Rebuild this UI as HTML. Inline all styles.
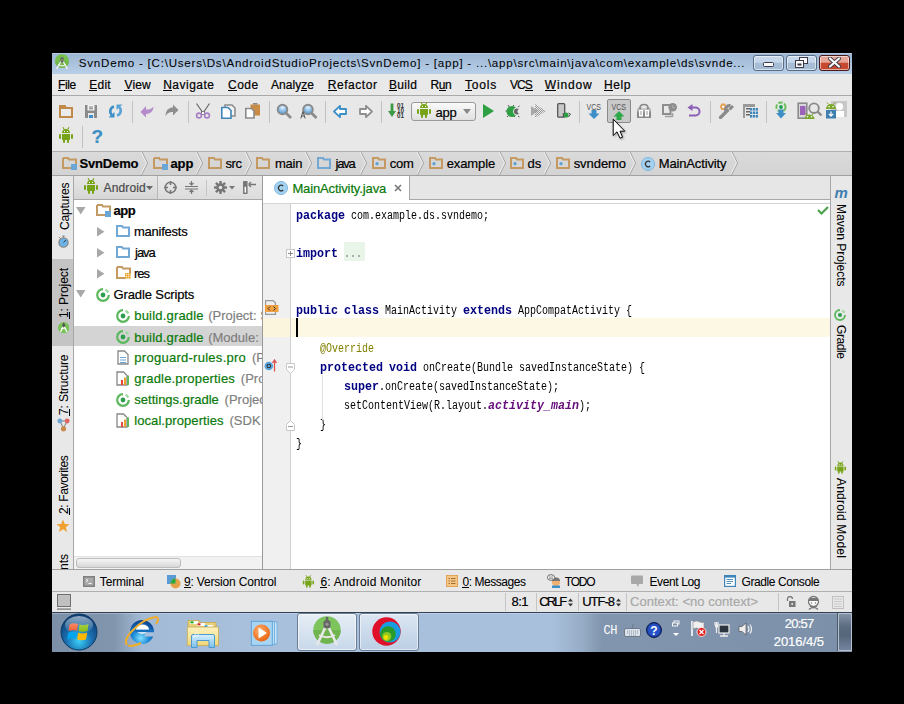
<!DOCTYPE html>
<html><head><meta charset="utf-8">
<style>
*{margin:0;padding:0;box-sizing:border-box}
html,body{width:904px;height:704px;background:#000;overflow:hidden;font-family:"Liberation Sans",sans-serif;font-size:13px;color:#000;position:relative}
.a{position:absolute;display:block}
.t{position:absolute;white-space:pre;-webkit-text-stroke:0.2px currentColor}
</style></head><body>
<div class="a" style="left:52px;top:53px;width:800px;height:599px;background:#e8e8e8;"></div>
<div class="a" style="left:52px;top:53px;width:800px;height:21px;background:linear-gradient(#9cb5d2,#b8cfe8);"></div>
<div class="a" style="left:52px;top:53px;width:800px;height:1px;background:#b4cbe6;"></div>
<div class="a" style="left:52px;top:74px;width:800px;height:21px;background:#e9e9e9;"></div>
<div class="a" style="left:52px;top:95px;width:800px;height:1px;background:#a9a9a9;"></div>
<div class="a" style="left:52px;top:96px;width:800px;height:55px;background:#e8e8e8;"></div>
<div class="a" style="left:52px;top:151px;width:800px;height:1px;background:#b0b0b0;"></div>
<div class="a" style="left:52px;top:152px;width:800px;height:23px;background:linear-gradient(#dadada,#d3d3d3);"></div>
<div class="a" style="left:52px;top:175px;width:800px;height:1px;background:#a0a0a0;"></div>
<div class="a" style="left:52px;top:176px;width:21px;height:393px;background:#e8e8e8;"></div>
<div class="a" style="left:52px;top:259px;width:21px;height:87px;background:#c4c4c4;"></div>
<div class="a" style="left:73px;top:176px;width:1px;height:393px;background:#a8a8a8;"></div>
<div class="a" style="left:74px;top:176px;width:188px;height:23px;background:linear-gradient(#e9e9e9,#dcdcdc);"></div>
<div class="a" style="left:74px;top:199px;width:188px;height:1px;background:#a8a8a8;"></div>
<div class="a" style="left:74px;top:200px;width:188px;height:369px;background:#fff;"></div>
<div class="a" style="left:262px;top:176px;width:1px;height:393px;background:#9a9a9a;"></div>
<div class="a" style="left:263px;top:176px;width:567px;height:27px;background:#fff;"></div>
<div class="a" style="left:410px;top:176px;width:420px;height:23px;background:#e6e6e6;"></div>
<div class="a" style="left:409px;top:176px;width:1px;height:24px;background:#a8a8a8;"></div>
<div class="a" style="left:410px;top:199px;width:420px;height:1px;background:#a8a8a8;"></div>
<div class="a" style="left:263px;top:203px;width:567px;height:1px;background:#d4d4d4;"></div>
<div class="a" style="left:263px;top:204px;width:27px;height:365px;background:#f0f0f0;"></div>
<div class="a" style="left:290px;top:204px;width:1px;height:365px;background:#d0d0d0;"></div>
<div class="a" style="left:291px;top:204px;width:539px;height:365px;background:#fff;"></div>
<div class="a" style="left:830px;top:176px;width:1px;height:393px;background:#a8a8a8;"></div>
<div class="a" style="left:831px;top:176px;width:21px;height:393px;background:#e8e8e8;"></div>
<div class="a" style="left:52px;top:569px;width:800px;height:1px;background:#a0a0a0;"></div>
<div class="a" style="left:52px;top:570px;width:800px;height:21px;background:#e8e8e8;"></div>
<div class="a" style="left:52px;top:591px;width:800px;height:1px;background:#b0b0b0;"></div>
<div class="a" style="left:52px;top:592px;width:800px;height:20px;background:#e8e8e8;"></div>
<div class="a" style="left:52px;top:612px;width:800px;height:40px;background:linear-gradient(90deg,#7d90a9 0px,#8195ad 62px,#a3bad6 90px,#a8c0dc 200px,#a8c0dc 500px,#97acc6 530px,#8195ae 550px,#7c90a9 800px);"></div>
<div class="a" style="left:52px;top:612px;width:800px;height:1px;background:#334155;"></div>
<div class="a" style="left:52px;top:613px;width:800px;height:1px;background:rgba(255,255,255,0.25);"></div>
<div class="a" style="left:74px;top:176px;width:84px;height:23px;background:linear-gradient(#e6e6e6,#d6d6d6);border-right:1px solid #b8b8b8;"></div>
<div class="a" style="left:74px;top:326px;width:188px;height:20px;background:#d4d4d4;"></div>
<div class="a" style="left:291px;top:318px;width:539px;height:19px;background:#fdf8e3;"></div>
<div class="a" style="left:263px;top:318px;width:27px;height:19px;background:#fbf5dd;"></div>
<div class="a" style="left:344px;top:242px;width:21px;height:19px;background:#eaf5ea;"></div>
<div class="t" style="left:78.80px;top:57.38px;font-size:11.6px;line-height:11.6px;color:#000;letter-spacing:0.759px;-webkit-text-stroke:0.05px;">SvnDemo - [C:\Users\Ds\AndroidStudioProjects\SvnDemo] - [app] - ...\app\src\main\java\com\example\ds\svnde...</div>
<div class="t" style="left:58.00px;top:79.04px;font-size:12px;line-height:12.0px;color:#000;letter-spacing:-0.367px;">File</div>
<div class="a" style="left:58px;top:90px;width:7px;height:1px;background:#000;"></div>
<div class="t" style="left:89.20px;top:79.04px;font-size:12px;line-height:12.0px;color:#000;letter-spacing:0.267px;">Edit</div>
<div class="a" style="left:89px;top:90px;width:8px;height:1px;background:#000;"></div>
<div class="t" style="left:124.40px;top:79.04px;font-size:12px;line-height:12.0px;color:#000;letter-spacing:0.200px;">View</div>
<div class="a" style="left:124px;top:90px;width:8px;height:1px;background:#000;"></div>
<div class="t" style="left:163.20px;top:79.04px;font-size:12px;line-height:12.0px;color:#000;letter-spacing:0.486px;">Navigate</div>
<div class="a" style="left:163px;top:90px;width:9px;height:1px;background:#000;"></div>
<div class="t" style="left:228.00px;top:79.04px;font-size:12px;line-height:12.0px;color:#000;letter-spacing:0.467px;">Code</div>
<div class="a" style="left:228px;top:90px;width:9px;height:1px;background:#000;"></div>
<div class="t" style="left:271.00px;top:79.04px;font-size:12px;line-height:12.0px;color:#000;letter-spacing:0.033px;">Analyze</div>
<div class="a" style="left:301px;top:90px;width:6px;height:1px;background:#000;"></div>
<div class="t" style="left:327.80px;top:79.04px;font-size:12px;line-height:12.0px;color:#000;letter-spacing:0.543px;">Refactor</div>
<div class="a" style="left:328px;top:90px;width:9px;height:1px;background:#000;"></div>
<div class="t" style="left:389.00px;top:79.04px;font-size:12px;line-height:12.0px;color:#000;letter-spacing:0.325px;">Build</div>
<div class="a" style="left:389px;top:90px;width:8px;height:1px;background:#000;"></div>
<div class="t" style="left:430.40px;top:79.04px;font-size:12px;line-height:12.0px;color:#000;letter-spacing:-0.350px;">Run</div>
<div class="a" style="left:439px;top:90px;width:7px;height:1px;background:#000;"></div>
<div class="t" style="left:465.00px;top:79.04px;font-size:12px;line-height:12.0px;color:#000;letter-spacing:0.825px;">Tools</div>
<div class="a" style="left:465px;top:90px;width:7px;height:1px;background:#000;"></div>
<div class="t" style="left:510.00px;top:79.04px;font-size:12px;line-height:12.0px;color:#000;letter-spacing:-1.000px;">VCS</div>
<div class="a" style="left:525px;top:90px;width:8px;height:1px;background:#000;"></div>
<div class="t" style="left:544.80px;top:79.04px;font-size:12px;line-height:12.0px;color:#000;letter-spacing:0.820px;">Window</div>
<div class="a" style="left:545px;top:90px;width:11px;height:1px;background:#000;"></div>
<div class="t" style="left:603.90px;top:79.04px;font-size:12px;line-height:12.0px;color:#000;letter-spacing:0.633px;">Help</div>
<div class="a" style="left:604px;top:90px;width:9px;height:1px;background:#000;"></div>
<div class="t" style="left:79.50px;top:157.30px;font-size:13px;line-height:13.0px;color:#000;letter-spacing:-0.167px;font-weight:bold;">SvnDemo</div>
<div class="t" style="left:170.40px;top:157.30px;font-size:13px;line-height:13.0px;color:#000;letter-spacing:-0.050px;font-weight:bold;">app</div>
<div class="t" style="left:225.50px;top:157.30px;font-size:13px;line-height:13.0px;color:#000;letter-spacing:-0.450px;">src</div>
<div class="t" style="left:274.90px;top:157.30px;font-size:13px;line-height:13.0px;color:#000;letter-spacing:-0.167px;">main</div>
<div class="t" style="left:335.50px;top:157.30px;font-size:13px;line-height:13.0px;color:#000;letter-spacing:-1.167px;">java</div>
<div class="t" style="left:389.70px;top:157.30px;font-size:13px;line-height:13.0px;color:#000;letter-spacing:-0.150px;">com</div>
<div class="t" style="left:446.70px;top:157.30px;font-size:13px;line-height:13.0px;color:#000;letter-spacing:-0.100px;">example</div>
<div class="t" style="left:527.50px;top:157.30px;font-size:13px;line-height:13.0px;color:#000;letter-spacing:-0.100px;">ds</div>
<div class="t" style="left:573.70px;top:157.30px;font-size:13px;line-height:13.0px;color:#000;letter-spacing:-0.067px;">svndemo</div>
<div class="t" style="left:658.70px;top:157.30px;font-size:13px;line-height:13.0px;color:#000;letter-spacing:-0.136px;">MainActivity</div>
<div class="t" style="left:103.50px;top:181.74px;font-size:12px;line-height:12.0px;color:#4a4a4a;letter-spacing:0.133px;">Android</div>
<div class="a" style="left:74px;top:200px;width:188px;height:369px;overflow:hidden">
<div class="t" style="left:39.50px;top:3.80px;font-size:13px;line-height:13.0px;color:#000;letter-spacing:-0.500px;font-weight:bold;">app</div>
<div class="t" style="left:60.00px;top:25.00px;font-size:13px;line-height:13.0px;color:#000;letter-spacing:-0.250px;">manifests</div>
<div class="t" style="left:61.00px;top:46.00px;font-size:13px;line-height:13.0px;color:#000;letter-spacing:-1.000px;">java</div>
<div class="t" style="left:60.00px;top:67.00px;font-size:13px;line-height:13.0px;color:#000;letter-spacing:-1.000px;">res</div>
<div class="t" style="left:39.50px;top:88.20px;font-size:13px;line-height:13.0px;color:#000;letter-spacing:-0.115px;">Gradle Scripts</div>
<div class="t" style="left:60.30px;top:109.00px;font-size:13px;line-height:13.0px;color:#0a7a0a;letter-spacing:0.182px;">build.gradle</div>
<div class="t" style="left:134.20px;top:109.00px;font-size:13px;line-height:13.0px;color:#7f7f7f;">(Project: SvnDemo)</div>
<div class="t" style="left:60.30px;top:130.70px;font-size:13px;line-height:13.0px;color:#0a7a0a;letter-spacing:0.182px;">build.gradle</div>
<div class="t" style="left:134.20px;top:130.70px;font-size:13px;line-height:13.0px;color:#7f7f7f;">(Module: app)</div>
<div class="t" style="left:60.30px;top:151.00px;font-size:13px;line-height:13.0px;color:#0a7a0a;letter-spacing:0.271px;">proguard-rules.pro</div>
<div class="t" style="left:177.90px;top:151.00px;font-size:13px;line-height:13.0px;color:#7f7f7f;">(ProGuard Rules for app)</div>
<div class="t" style="left:60.30px;top:172.00px;font-size:13px;line-height:13.0px;color:#0a7a0a;letter-spacing:0.188px;">gradle.properties</div>
<div class="t" style="left:166.80px;top:172.00px;font-size:13px;line-height:13.0px;color:#7f7f7f;">(Project Properties)</div>
<div class="t" style="left:60.30px;top:193.00px;font-size:13px;line-height:13.0px;color:#0a7a0a;">settings.gradle</div>
<div class="t" style="left:150.60px;top:193.00px;font-size:13px;line-height:13.0px;color:#7f7f7f;">(Project Settings)</div>
<div class="t" style="left:60.30px;top:214.00px;font-size:13px;line-height:13.0px;color:#0a7a0a;letter-spacing:0.067px;">local.properties</div>
<div class="t" style="left:155.50px;top:214.00px;font-size:13px;line-height:13.0px;color:#7f7f7f;">(SDK Location)</div>
</div>
<div class="t" style="left:292.40px;top:182.00px;font-size:13px;line-height:13.0px;color:#0a7a0a;letter-spacing:-0.125px;">MainActivity.java</div>
<div class="t" style="left:99.80px;top:575.84px;font-size:12px;line-height:12.0px;color:#000;letter-spacing:-0.171px;-webkit-text-stroke:0.05px;">Terminal</div>
<div class="t" style="left:184.00px;top:575.84px;font-size:12px;line-height:12.0px;color:#000;letter-spacing:-0.176px;-webkit-text-stroke:0.05px;">9: Version Control</div>
<div class="a" style="left:184px;top:587px;width:7px;height:1px;background:#000;"></div>
<div class="t" style="left:320.50px;top:575.84px;font-size:12px;line-height:12.0px;color:#000;letter-spacing:0.200px;-webkit-text-stroke:0.05px;">6: Android Monitor</div>
<div class="a" style="left:320px;top:587px;width:7px;height:1px;background:#000;"></div>
<div class="t" style="left:462.50px;top:575.84px;font-size:12px;line-height:12.0px;color:#000;letter-spacing:-0.450px;-webkit-text-stroke:0.05px;">0: Messages</div>
<div class="a" style="left:462px;top:587px;width:7px;height:1px;background:#000;"></div>
<div class="t" style="left:564.70px;top:575.84px;font-size:12px;line-height:12.0px;color:#000;letter-spacing:-1.167px;-webkit-text-stroke:0.05px;">TODO</div>
<div class="t" style="left:649.40px;top:575.84px;font-size:12px;line-height:12.0px;color:#000;letter-spacing:-0.362px;-webkit-text-stroke:0.05px;">Event Log</div>
<div class="t" style="left:741.50px;top:575.84px;font-size:12px;line-height:12.0px;color:#000;letter-spacing:-0.400px;-webkit-text-stroke:0.05px;">Gradle Console</div>
<div class="t" style="left:511.50px;top:595.20px;font-size:13px;line-height:13.0px;color:#000;letter-spacing:-0.500px;">8:1</div>
<div class="t" style="left:539.30px;top:595.20px;font-size:13px;line-height:13.0px;color:#000;letter-spacing:-2.000px;">CRLF</div>
<div class="t" style="left:582.20px;top:595.20px;font-size:13px;line-height:13.0px;color:#000;letter-spacing:-1.000px;">UTF-8</div>
<div class="t" style="left:630.00px;top:595.20px;font-size:13px;line-height:13.0px;color:#a8a8a8;letter-spacing:0.040px;">Context: &lt;no context&gt;</div>
<div class="t" style="left:603.40px;top:625.10px;font-size:12px;line-height:12.0px;color:#fff;letter-spacing:-0.400px;font-family:'Liberation Mono',monospace;-webkit-text-stroke:0;">CH</div>
<div class="t" style="left:784.70px;top:617.30px;font-size:13px;line-height:13.0px;color:#fff;letter-spacing:-0.750px;">20:57</div>
<div class="t" style="left:773.70px;top:635.20px;font-size:13px;line-height:13.0px;color:#fff;letter-spacing:-0.029px;">2016/4/5</div>
<div class="t" style="left:295.50px;top:210.40px;font-size:12px;line-height:12px;color:#000080;font-family:'Liberation Mono',monospace;transform-origin:0 0;transform:scaleX(0.9722);-webkit-text-stroke:0;font-weight:bold;">package</div>
<div class="t" style="left:344.50px;top:210.40px;font-size:12px;line-height:12px;color:#000;font-family:'Liberation Mono',monospace;transform-origin:0 0;transform:scaleX(0.8333);-webkit-text-stroke:0;"> com.example.ds.svndemo;</div>
<div class="t" style="left:295.50px;top:248.40px;font-size:12px;line-height:12px;color:#000080;font-family:'Liberation Mono',monospace;transform-origin:0 0;transform:scaleX(0.9722);-webkit-text-stroke:0;font-weight:bold;">import</div>
<div class="t" style="left:343.50px;top:248.40px;font-size:12px;line-height:12px;color:#808080;font-family:'Liberation Mono',monospace;transform-origin:0 0;transform:scaleX(0.8333);-webkit-text-stroke:0;">...</div>
<div class="t" style="left:295.50px;top:305.40px;font-size:12px;line-height:12px;color:#000080;font-family:'Liberation Mono',monospace;transform-origin:0 0;transform:scaleX(0.9722);-webkit-text-stroke:0;font-weight:bold;">public</div>
<div class="t" style="left:343.50px;top:305.40px;font-size:12px;line-height:12px;color:#000080;font-family:'Liberation Mono',monospace;transform-origin:0 0;transform:scaleX(0.9722);-webkit-text-stroke:0;font-weight:bold;">class</div>
<div class="t" style="left:378.50px;top:305.40px;font-size:12px;line-height:12px;color:#000;font-family:'Liberation Mono',monospace;transform-origin:0 0;transform:scaleX(0.8333);-webkit-text-stroke:0;"> MainActivity </div>
<div class="t" style="left:462.50px;top:305.40px;font-size:12px;line-height:12px;color:#000080;font-family:'Liberation Mono',monospace;transform-origin:0 0;transform:scaleX(0.9722);-webkit-text-stroke:0;font-weight:bold;">extends</div>
<div class="t" style="left:511.50px;top:305.40px;font-size:12px;line-height:12px;color:#000;font-family:'Liberation Mono',monospace;transform-origin:0 0;transform:scaleX(0.8333);-webkit-text-stroke:0;"> AppCompatActivity {</div>
<div class="t" style="left:319.50px;top:343.40px;font-size:12px;line-height:12px;color:#808000;font-family:'Liberation Mono',monospace;transform-origin:0 0;transform:scaleX(0.8333);-webkit-text-stroke:0;">@Override</div>
<div class="t" style="left:319.50px;top:362.40px;font-size:12px;line-height:12px;color:#000080;font-family:'Liberation Mono',monospace;transform-origin:0 0;transform:scaleX(0.9722);-webkit-text-stroke:0;font-weight:bold;">protected</div>
<div class="t" style="left:388.50px;top:362.40px;font-size:12px;line-height:12px;color:#000080;font-family:'Liberation Mono',monospace;transform-origin:0 0;transform:scaleX(0.9722);-webkit-text-stroke:0;font-weight:bold;">void</div>
<div class="t" style="left:416.50px;top:362.40px;font-size:12px;line-height:12px;color:#000;font-family:'Liberation Mono',monospace;transform-origin:0 0;transform:scaleX(0.8333);-webkit-text-stroke:0;"> onCreate(Bundle savedInstanceState) {</div>
<div class="t" style="left:343.50px;top:381.40px;font-size:12px;line-height:12px;color:#000080;font-family:'Liberation Mono',monospace;transform-origin:0 0;transform:scaleX(0.9722);-webkit-text-stroke:0;font-weight:bold;">super</div>
<div class="t" style="left:378.50px;top:381.40px;font-size:12px;line-height:12px;color:#000;font-family:'Liberation Mono',monospace;transform-origin:0 0;transform:scaleX(0.8333);-webkit-text-stroke:0;">.onCreate(savedInstanceState);</div>
<div class="t" style="left:295.50px;top:400.40px;font-size:12px;line-height:12px;color:#000;font-family:'Liberation Mono',monospace;transform-origin:0 0;transform:scaleX(0.8333);-webkit-text-stroke:0;">        setContentView(R.layout.</div>
<div class="t" style="left:487.50px;top:400.40px;font-size:12px;line-height:12px;color:#660e7a;font-family:'Liberation Mono',monospace;transform-origin:0 0;transform:scaleX(0.9722);-webkit-text-stroke:0;font-weight:bold;font-style:italic;">activity_main</div>
<div class="t" style="left:578.50px;top:400.40px;font-size:12px;line-height:12px;color:#000;font-family:'Liberation Mono',monospace;transform-origin:0 0;transform:scaleX(0.8333);-webkit-text-stroke:0;">);</div>
<div class="t" style="left:295.50px;top:419.40px;font-size:12px;line-height:12px;color:#000;font-family:'Liberation Mono',monospace;transform-origin:0 0;transform:scaleX(0.8333);-webkit-text-stroke:0;">    }</div>
<div class="t" style="left:295.50px;top:438.40px;font-size:12px;line-height:12px;color:#000;font-family:'Liberation Mono',monospace;transform-origin:0 0;transform:scaleX(0.8333);-webkit-text-stroke:0;">}</div>
<div class="a" style="left:296px;top:318px;width:2px;height:19px;background:#000;"></div>
<svg class="a" style="left:59px;top:105px;" width="14" height="13" viewBox="0 0 14 13"><path d="M0 0 H6.5 L7.5 2 H14 V13 H0 Z" fill="#c28a48"/><rect x="2" y="4" width="10" height="7" fill="#ececec"/></svg>
<svg class="a" style="left:85px;top:105px;" width="12" height="13" viewBox="0 0 12 13"><path d="M0 0 H12 V13 H0 Z" fill="#8a8a8a"/><rect x="2.5" y="0" width="7" height="5.5" fill="#f4f4f4"/><rect x="4" y="1.5" width="4" height="1" fill="#777"/><rect x="4" y="3.3" width="4" height="1" fill="#777"/><rect x="3" y="8" width="6" height="5" fill="#e8e8e8"/><rect x="4" y="10" width="4" height="3" fill="#3d8fc6"/></svg>
<svg class="a" style="left:108px;top:104px;" width="15" height="14" viewBox="0 0 15 14"><path d="M6 2.5 A5 5 0 0 0 4.5 11.5" fill="none" stroke="#3d8fc6" stroke-width="2.6"/><path d="M9 11.5 A5 5 0 0 0 10.5 2.5" fill="none" stroke="#5aa3d4" stroke-width="2.6"/><path d="M0.5 13.5 L6.5 13.5 L6.5 8 Z" fill="#3d8fc6"/><path d="M14.5 0.5 L8.5 0.5 L8.5 6 Z" fill="#5aa3d4"/></svg>
<div class="a" style="left:132px;top:101px;width:1px;height:22px;background:#c2c2c2;"></div>
<svg class="a" style="left:140px;top:105px;" width="14" height="13" viewBox="0 0 14 13"><path d="M0.5 7 L6 1 L6 4.5 C9 4.5 12 4 13.5 1.5 C13.5 6 10.5 9 6 9 L6 12.5 Z" fill="#b48bcb"/></svg>
<svg class="a" style="left:165px;top:104px;" width="14" height="13" viewBox="0 0 14 13"><path d="M13.5 6 L8 0.5 L8 3.5 C4 3.5 0.5 6 0.5 12.5 C2 9 4.5 8 8 8 L8 11.5 Z" fill="#8e8e8e"/></svg>
<div class="a" style="left:188px;top:101px;width:1px;height:22px;background:#c2c2c2;"></div>
<svg class="a" style="left:195px;top:103px;" width="16" height="16" viewBox="0 0 16 16"><path d="M1.5 0.5 L8 10 M14.5 0.5 L8 10" stroke="#666" stroke-width="1.2" fill="none"/><rect x="6.5" y="8.5" width="3" height="3" fill="#fff" stroke="#666" stroke-width="0.8"/><circle cx="4" cy="12.5" r="2.4" fill="none" stroke="#a77fc4" stroke-width="1.6"/><circle cx="12" cy="12.5" r="2.4" fill="none" stroke="#a77fc4" stroke-width="1.6"/></svg>
<svg class="a" style="left:221px;top:104px;" width="15" height="15" viewBox="0 0 15 15"><path d="M4 1 H11 L14 4 V12 H4 Z" fill="#f2f2f2" stroke="#8a8a8a" stroke-width="1.5"/><path d="M0.8 3.5 H7 L10 6.5 V14.2 H0.8 Z" fill="#fff" stroke="#3e86b8" stroke-width="1.6"/></svg>
<svg class="a" style="left:245px;top:103px;" width="16" height="16" viewBox="0 0 16 16"><rect x="5.5" y="1.5" width="9.5" height="11" fill="#c98b45"/><rect x="8" y="0" width="4.5" height="1.6" fill="#888"/><path d="M0.8 5.5 H6.5 L9 8 V15 H0.8 Z" fill="#fff" stroke="#8a8a8a" stroke-width="1.6"/></svg>
<div class="a" style="left:269px;top:101px;width:1px;height:22px;background:#c2c2c2;"></div>
<svg class="a" style="left:276px;top:103px;" width="17" height="16" viewBox="0 0 17 16"><defs><radialGradient id="lg1" cx="0.5" cy="0.3" r="0.6"><stop offset="0" stop-color="#e4f2ff"/><stop offset="1" stop-color="#5aa0d8"/></radialGradient></defs><circle cx="6.5" cy="6.5" r="4.8" fill="url(#lg1)" stroke="#8a8a8a" stroke-width="1.9"/><path d="M10 10 L15 15" stroke="#8a8a8a" stroke-width="2.6"/></svg>
<svg class="a" style="left:300px;top:103px;" width="18" height="16" viewBox="0 0 18 16"><circle cx="8" cy="6.5" r="4.8" fill="url(#lg1)" stroke="#8a8a8a" stroke-width="1.9"/><path d="M11.5 10 L16.5 15" stroke="#8a8a8a" stroke-width="2.6"/><path d="M0.8 15.5 L3 8.5 L5.2 15.5 M1.6 13 H4.4" stroke="#555" stroke-width="1" fill="none"/></svg>
<div class="a" style="left:325px;top:101px;width:1px;height:22px;background:#c2c2c2;"></div>
<svg class="a" style="left:333px;top:105px;" width="14" height="13" viewBox="0 0 14 13"><path d="M1 6.5 L7 0.8 V4 H13 V9 H7 V12.2 Z" fill="#fff" stroke="#3d8fc6" stroke-width="1.8" stroke-linejoin="round"/></svg>
<svg class="a" style="left:359px;top:105px;" width="14" height="13" viewBox="0 0 14 13"><path d="M13 6.5 L7 0.8 V4 H1 V9 H7 V12.2 Z" fill="#fff" stroke="#8e8e8e" stroke-width="1.8" stroke-linejoin="round"/></svg>
<div class="a" style="left:381px;top:101px;width:1px;height:22px;background:#c2c2c2;"></div>
<svg class="a" style="left:388px;top:103px;" width="17" height="16" viewBox="0 0 17 16"><path d="M4 0.5 V10" stroke="#3a9a45" stroke-width="2.8"/><path d="M0 8 L4 14 L8 8 Z" fill="#3a9a45"/><text x="9" y="5.3" font-family="Liberation Sans" font-size="6.3" font-weight="bold" fill="#333">01</text><text x="9" y="10.3" font-family="Liberation Sans" font-size="6.3" font-weight="bold" fill="#333">10</text><text x="9" y="15.3" font-family="Liberation Sans" font-size="6.3" font-weight="bold" fill="#333">01</text></svg>
<div class="a" style="left:411px;top:102px;width:65px;height:19px;background:linear-gradient(#fafafa,#e0e0e0);border:1px solid #9a9a9a;border-radius:3px;"></div>
<svg class="a" style="left:416px;top:102px;" width="16" height="16" viewBox="0 0 16 16"><g transform="scale(1.0)" fill="#77a318">
<path d="M4 6 C4 3.6 5.8 2 8 2 C10.2 2 12 3.6 12 6 Z"/>
<path d="M5 0.3 L6.3 2.6 M11 0.3 L9.7 2.6" stroke="#77a318" stroke-width="1.1" fill="none"/>
<path d="M4 7 H12 V12.2 Q12 13 11.2 13 H4.8 Q4 13 4 12.2 Z"/>
<rect x="1" y="7" width="2" height="5" rx="1"/>
<rect x="13" y="7" width="2" height="5" rx="1"/>
<rect x="5" y="12" width="2" height="4" rx="1"/>
<rect x="9" y="12" width="2" height="4" rx="1"/>
<rect x="6" y="4" width="1" height="1" fill="#fff"/><rect x="9" y="4" width="1" height="1" fill="#fff"/>
</g></svg>
<div class="t" style="left:435.50px;top:105.50px;font-size:13px;line-height:13.0px;color:#000;letter-spacing:-0.250px;">app</div>
<svg class="a" style="left:463px;top:109px;" width="8" height="5" viewBox="0 0 8 5"><path d="M0 0 H8 L4 5 Z" fill="#888"/></svg>
<svg class="a" style="left:483px;top:104px;" width="11" height="14" viewBox="0 0 11 14"><path d="M0 0 L11 7 L0 14 Z" fill="#2ea043"/></svg>
<svg class="a" style="left:505px;top:103px;" width="16" height="16" viewBox="0 0 16 16"><path d="M3 2 L4.5 4 M9 2 L7.5 4 M0.5 8 H2 M2 14 L3.5 12.5 M10 14 L8.5 12.5" stroke="#555" stroke-width="1"/><circle cx="7" cy="8.5" r="5.5" fill="#2ea043"/><circle cx="12.3" cy="8.5" r="4.2" fill="#e8e8e8"/><circle cx="12" cy="8.5" r="3" fill="#666"/><circle cx="14.8" cy="8.5" r="2.4" fill="#e8e8e8"/><path d="M13 4 L14.5 3 M13 13 L14.5 14" stroke="#555" stroke-width="1"/></svg>
<svg class="a" style="left:531px;top:104px;" width="15" height="14" viewBox="0 0 15 14"><defs><pattern id="dp" width="2" height="2" patternUnits="userSpaceOnUse"><rect width="1" height="1" fill="#999"/><rect x="1" y="1" width="1" height="1" fill="#999"/></pattern></defs><path d="M0 2 L7 7 L0 12 Z" fill="#a8a8a8"/><path d="M4 0 L15 7 L4 14 Z" fill="url(#dp)"/></svg>
<svg class="a" style="left:557px;top:103px;" width="14" height="16" viewBox="0 0 14 16"><rect x="0.7" y="0.7" width="7" height="13.5" rx="1" fill="#c8c8c8" stroke="#555" stroke-width="1.3"/><circle cx="9" cy="12" r="2.6" fill="#2ea043"/><path d="M11.5 10 L13.5 11 L11.5 14 M6 10 L6.5 12 L6 14" stroke="#333" stroke-width="0.8" fill="none"/></svg>
<div class="a" style="left:579px;top:101px;width:1px;height:22px;background:#c2c2c2;"></div>
<svg class="a" style="left:586px;top:103px;" width="16" height="8" viewBox="0 0 16 8"><text x="0.5" y="7.2" font-family="Liberation Sans" font-size="8.6" fill="#505050" textLength="14.5" lengthAdjust="spacingAndGlyphs">VCS</text></svg>
<svg class="a" style="left:588px;top:110px;" width="12" height="9" viewBox="0 0 12 9"><path d="M3.5 0 H8.5 V3.5 H11.5 L6 9 L0.5 3.5 H3.5 Z" fill="#3d8fc6"/></svg>
<div class="a" style="left:607px;top:99px;width:24px;height:24px;background:#c9c9c9;border:1px solid #8a8a8a;border-radius:2px;"></div>
<svg class="a" style="left:611px;top:103px;" width="16" height="8" viewBox="0 0 16 8"><text x="0.5" y="7.2" font-family="Liberation Sans" font-size="8.6" fill="#505050" textLength="14.5" lengthAdjust="spacingAndGlyphs">VCS</text></svg>
<svg class="a" style="left:613px;top:111px;" width="12" height="9" viewBox="0 0 12 9"><path d="M3.5 9 H8.5 V5.5 H11.5 L6 0 L0.5 5.5 H3.5 Z" fill="#2fa84a"/></svg>
<svg class="a" style="left:637px;top:103px;" width="14" height="15" viewBox="0 0 14 15"><defs><linearGradient id="cg" x1="0" y1="0" x2="0" y2="1"><stop offset="0" stop-color="#8a8a8a" stop-opacity="0.2"/><stop offset="0.5" stop-color="#8a8a8a"/></linearGradient></defs><rect x="0" y="5" width="14" height="10" fill="url(#cg)"/><rect x="2" y="7" width="4" height="6.5" fill="#fff"/><rect x="8" y="7" width="4" height="6.5" fill="#fff"/><path d="M3 9 H5 M3 11 H5 M9 9 H11 M9 11 H11" stroke="#888" stroke-width="0.9"/><path d="M3 5 Q3 1.5 7 1.5 Q11 1.5 11 5" stroke="#888" stroke-width="1.4" fill="none"/><path d="M1.2 4.5 H4.8 L3 7 Z M9.2 4.5 H12.8 L11 7 Z" fill="#888"/></svg>
<svg class="a" style="left:661px;top:103px;" width="17" height="16" viewBox="0 0 17 16"><rect x="2" y="2" width="7.5" height="9" fill="none" stroke="#8e8e8e" stroke-width="2"/><path d="M4 13.5 H11.5 V10" stroke="#a0a0a0" stroke-width="1.6" fill="none"/><circle cx="11.7" cy="4.3" r="4.3" fill="#8e8e8e"/><path d="M11.7 2 V4.6 H13.8" stroke="#b8b8b8" stroke-width="0.8" fill="none"/></svg>
<svg class="a" style="left:687px;top:104px;" width="14" height="14" viewBox="0 0 14 14"><path d="M5 3.5 H8.5 A4 4 0 0 1 8.5 11.5 H2" fill="none" stroke="#8b5fb5" stroke-width="2"/><path d="M0.5 3.5 L5.5 0 V7 Z" fill="#8b5fb5"/></svg>
<div class="a" style="left:710px;top:101px;width:1px;height:22px;background:#c2c2c2;"></div>
<svg class="a" style="left:718px;top:103px;" width="16" height="16" viewBox="0 0 16 16"><path d="M3.5 0.5 L7 0.5 L8.8 3.8 L7 7 L3.5 7 L1.7 3.8 Z" fill="#e3a052"/><circle cx="5.25" cy="3.8" r="1.4" fill="#f4f4f4"/><path d="M2.5 14.5 L9.5 7.5" stroke="#8a8a8a" stroke-width="3.2" stroke-linecap="round"/><path d="M8.2 8.5 A4 4 0 0 1 12.5 2.6" stroke="#8a8a8a" stroke-width="3.2" fill="none"/><path d="M11.5 6.5 L15 3" stroke="#8a8a8a" stroke-width="3"/></svg>
<svg class="a" style="left:742px;top:103px;" width="16" height="16" viewBox="0 0 16 16"><rect x="1" y="1" width="12" height="3" fill="#999"/><rect x="1" y="1" width="2" height="14" fill="#999"/><rect x="4" y="5" width="4" height="1.5" fill="#666"/><rect x="4" y="8" width="4" height="1.5" fill="#666"/><rect x="4" y="11" width="4" height="1.5" fill="#666"/><rect x="8" y="5.0" width="2.3" height="2.6" fill="#3e86b8"/><rect x="8" y="8.5" width="2.3" height="2.6" fill="#3e86b8"/><rect x="8" y="12.0" width="2.3" height="2.6" fill="#3e86b8"/><rect x="11" y="5.0" width="2.3" height="2.6" fill="#3e86b8"/><rect x="11" y="8.5" width="2.3" height="2.6" fill="#3e86b8"/><rect x="11" y="12.0" width="2.3" height="2.6" fill="#3e86b8"/><rect x="14" y="5.0" width="2.3" height="2.6" fill="#3e86b8"/><rect x="14" y="8.5" width="2.3" height="2.6" fill="#3e86b8"/><rect x="14" y="12.0" width="2.3" height="2.6" fill="#3e86b8"/></svg>
<div class="a" style="left:766px;top:101px;width:1px;height:22px;background:#c2c2c2;"></div>
<svg class="a" style="left:775px;top:101px;" width="12" height="18" viewBox="0 0 12 18"><circle cx="6" cy="6" r="4.6" fill="none" stroke="#6cbf5a" stroke-width="2" stroke-dasharray="4.5 1.6"/><circle cx="6" cy="6" r="1.9" fill="#1e9e50"/><path d="M3.5 8.5 H8.5 V12 H11 L6 17.5 L1 12 H3.5 Z" fill="#3d8fc6"/></svg>
<svg class="a" style="left:797px;top:102px;" width="26" height="18" viewBox="0 0 26 18"><rect x="1.2" y="1.2" width="8.6" height="15" fill="#d8d8d8" stroke="#8a8a8a" stroke-width="1.6"/><rect x="3" y="4" width="5.5" height="9" fill="#9a62b8"/><circle cx="17" cy="6.2" r="4.8" fill="none" stroke="#8a8a8a" stroke-width="1.9"/><path d="M20.5 9.5 L24.5 13.5" stroke="#8a8a8a" stroke-width="2.4"/><path d="M7.5 17 A5 4.5 0 0 1 17.5 17 Z" fill="#7aa62b"/><circle cx="10.5" cy="14.8" r="0.8" fill="#fff"/><circle cx="14.5" cy="14.8" r="0.8" fill="#fff"/><path d="M8.5 11 L9.8 12.8 M16.5 11 L15.2 12.8" stroke="#7aa62b"/></svg>
<div class="a" style="left:831px;top:101px;width:16px;height:16px;background:#c8c8c8;"></div>
<svg class="a" style="left:825px;top:101px;" width="26" height="18" viewBox="0 0 26 18"><circle cx="14.5" cy="5.6" r="3.6" fill="#fff"/><rect x="11" y="10" width="8" height="6" fill="#fff"/><rect x="1" y="9" width="10" height="8.5" fill="#3e7fb0"/><path d="M6 10.5 V15 M3.8 12.8 L6 15.2 L8.2 12.8" stroke="#fff" stroke-width="1.2" fill="none"/><path d="M1 8 A5 5 0 0 1 11 8 Z" fill="#7aa62b"/><circle cx="4" cy="5.8" r="0.8" fill="#fff"/><circle cx="8" cy="5.8" r="0.8" fill="#fff"/><path d="M2 1.5 L3.5 3.5 M10 1.5 L8.5 3.5" stroke="#7aa62b"/></svg>
<svg class="a" style="left:58px;top:127px;" width="16" height="16" viewBox="0 0 16 16"><g transform="scale(1.0)" fill="#77a318">
<path d="M4 6 C4 3.6 5.8 2 8 2 C10.2 2 12 3.6 12 6 Z"/>
<path d="M5 0.3 L6.3 2.6 M11 0.3 L9.7 2.6" stroke="#77a318" stroke-width="1.1" fill="none"/>
<path d="M4 7 H12 V12.2 Q12 13 11.2 13 H4.8 Q4 13 4 12.2 Z"/>
<rect x="1" y="7" width="2" height="5" rx="1"/>
<rect x="13" y="7" width="2" height="5" rx="1"/>
<rect x="5" y="12" width="2" height="4" rx="1"/>
<rect x="9" y="12" width="2" height="4" rx="1"/>
<rect x="6" y="4" width="1" height="1" fill="#fff"/><rect x="9" y="4" width="1" height="1" fill="#fff"/>
</g></svg>
<div class="a" style="left:82px;top:126px;width:1px;height:22px;background:#c2c2c2;"></div>
<div class="t" style="left:91.50px;top:126.72px;font-size:19px;line-height:19.0px;color:#3d8fc6;font-weight:bold;">?</div>
<svg class="a" style="left:62px;top:157px;" width="15" height="13" viewBox="0 0 15 13"><path d="M1 1 H6 L7 2.5 H14 V8 M10 11 H1 V1" fill="none" stroke="#c49a62" stroke-width="2"/><rect x="9" y="7" width="6" height="6" fill="#6aa6d6"/></svg>
<svg class="a" style="left:141px;top:151px;" width="8" height="24" viewBox="0 0 8 24"><path d="M0.5 0 L6.5 12 L0.5 24" fill="none" stroke="#9a9a9a" stroke-width="1"/><path d="M-0.5 0 L5.5 12 L-0.5 24" fill="none" stroke="#f0f0f0" stroke-width="1"/></svg>
<svg class="a" style="left:153px;top:157px;" width="15" height="13" viewBox="0 0 15 13"><path d="M1 1 H6 L7 2.5 H14 V8 M10 11 H1 V1" fill="none" stroke="#c49a62" stroke-width="2"/><rect x="9" y="7" width="6" height="6" fill="#6aa6d6"/></svg>
<svg class="a" style="left:196px;top:151px;" width="8" height="24" viewBox="0 0 8 24"><path d="M0.5 0 L6.5 12 L0.5 24" fill="none" stroke="#9a9a9a" stroke-width="1"/><path d="M-0.5 0 L5.5 12 L-0.5 24" fill="none" stroke="#f0f0f0" stroke-width="1"/></svg>
<svg class="a" style="left:208px;top:157px;" width="14" height="12" viewBox="0 0 14 12"><path d="M1 1 H6 L7 2.5 H13 V11 H1 Z" fill="none" stroke="#c49a62" stroke-width="2" stroke-linejoin="miter"/></svg>
<svg class="a" style="left:245px;top:151px;" width="8" height="24" viewBox="0 0 8 24"><path d="M0.5 0 L6.5 12 L0.5 24" fill="none" stroke="#9a9a9a" stroke-width="1"/><path d="M-0.5 0 L5.5 12 L-0.5 24" fill="none" stroke="#f0f0f0" stroke-width="1"/></svg>
<svg class="a" style="left:256px;top:157px;" width="14" height="12" viewBox="0 0 14 12"><path d="M1 1 H6 L7 2.5 H13 V11 H1 Z" fill="none" stroke="#c49a62" stroke-width="2" stroke-linejoin="miter"/></svg>
<svg class="a" style="left:305px;top:151px;" width="8" height="24" viewBox="0 0 8 24"><path d="M0.5 0 L6.5 12 L0.5 24" fill="none" stroke="#9a9a9a" stroke-width="1"/><path d="M-0.5 0 L5.5 12 L-0.5 24" fill="none" stroke="#f0f0f0" stroke-width="1"/></svg>
<svg class="a" style="left:317px;top:157px;" width="14" height="12" viewBox="0 0 14 12"><path d="M1 1 H6 L7 2.5 H13 V11 H1 Z" fill="none" stroke="#72a8d4" stroke-width="2" stroke-linejoin="miter"/></svg>
<svg class="a" style="left:360px;top:151px;" width="8" height="24" viewBox="0 0 8 24"><path d="M0.5 0 L6.5 12 L0.5 24" fill="none" stroke="#9a9a9a" stroke-width="1"/><path d="M-0.5 0 L5.5 12 L-0.5 24" fill="none" stroke="#f0f0f0" stroke-width="1"/></svg>
<svg class="a" style="left:372px;top:157px;" width="14" height="12" viewBox="0 0 14 12"><path d="M1 1 H6 L7 2.5 H13 V11 H1 Z" fill="none" stroke="#c49a62" stroke-width="2" stroke-linejoin="miter"/><circle cx="5" cy="6.7" r="1.6" fill="#5a9fd6"/></svg>
<svg class="a" style="left:417px;top:151px;" width="8" height="24" viewBox="0 0 8 24"><path d="M0.5 0 L6.5 12 L0.5 24" fill="none" stroke="#9a9a9a" stroke-width="1"/><path d="M-0.5 0 L5.5 12 L-0.5 24" fill="none" stroke="#f0f0f0" stroke-width="1"/></svg>
<svg class="a" style="left:429px;top:157px;" width="14" height="12" viewBox="0 0 14 12"><path d="M1 1 H6 L7 2.5 H13 V11 H1 Z" fill="none" stroke="#c49a62" stroke-width="2" stroke-linejoin="miter"/><circle cx="5" cy="6.7" r="1.6" fill="#5a9fd6"/></svg>
<svg class="a" style="left:499px;top:151px;" width="8" height="24" viewBox="0 0 8 24"><path d="M0.5 0 L6.5 12 L0.5 24" fill="none" stroke="#9a9a9a" stroke-width="1"/><path d="M-0.5 0 L5.5 12 L-0.5 24" fill="none" stroke="#f0f0f0" stroke-width="1"/></svg>
<svg class="a" style="left:510px;top:157px;" width="14" height="12" viewBox="0 0 14 12"><path d="M1 1 H6 L7 2.5 H13 V11 H1 Z" fill="none" stroke="#c49a62" stroke-width="2" stroke-linejoin="miter"/><circle cx="5" cy="6.7" r="1.6" fill="#5a9fd6"/></svg>
<svg class="a" style="left:544px;top:151px;" width="8" height="24" viewBox="0 0 8 24"><path d="M0.5 0 L6.5 12 L0.5 24" fill="none" stroke="#9a9a9a" stroke-width="1"/><path d="M-0.5 0 L5.5 12 L-0.5 24" fill="none" stroke="#f0f0f0" stroke-width="1"/></svg>
<svg class="a" style="left:556px;top:157px;" width="14" height="12" viewBox="0 0 14 12"><path d="M1 1 H6 L7 2.5 H13 V11 H1 Z" fill="none" stroke="#c49a62" stroke-width="2" stroke-linejoin="miter"/><circle cx="5" cy="6.7" r="1.6" fill="#5a9fd6"/></svg>
<svg class="a" style="left:629px;top:151px;" width="8" height="24" viewBox="0 0 8 24"><path d="M0.5 0 L6.5 12 L0.5 24" fill="none" stroke="#9a9a9a" stroke-width="1"/><path d="M-0.5 0 L5.5 12 L-0.5 24" fill="none" stroke="#f0f0f0" stroke-width="1"/></svg>
<svg class="a" style="left:641px;top:157px;" width="14" height="14" viewBox="0 0 14 14"><circle cx="7" cy="7" r="6.5" fill="#a6d2f2" stroke="#7ab6e0" stroke-width="1"/><path d="M9.2 5 A2.8 2.8 0 1 0 9.2 9" fill="none" stroke="#333" stroke-width="1.2"/></svg>
<svg class="a" style="left:731px;top:151px;" width="8" height="24" viewBox="0 0 8 24"><path d="M0.5 0 L6.5 12 L0.5 24" fill="none" stroke="#9a9a9a" stroke-width="1"/><path d="M-0.5 0 L5.5 12 L-0.5 24" fill="none" stroke="#f0f0f0" stroke-width="1"/></svg>
<svg class="a" style="left:83px;top:178px;" width="16" height="16" viewBox="0 0 16 16"><g transform="scale(1.0)" fill="#77a318">
<path d="M4 6 C4 3.6 5.8 2 8 2 C10.2 2 12 3.6 12 6 Z"/>
<path d="M5 0.3 L6.3 2.6 M11 0.3 L9.7 2.6" stroke="#77a318" stroke-width="1.1" fill="none"/>
<path d="M4 7 H12 V12.2 Q12 13 11.2 13 H4.8 Q4 13 4 12.2 Z"/>
<rect x="1" y="7" width="2" height="5" rx="1"/>
<rect x="13" y="7" width="2" height="5" rx="1"/>
<rect x="5" y="12" width="2" height="4" rx="1"/>
<rect x="9" y="12" width="2" height="4" rx="1"/>
<rect x="6" y="4" width="1" height="1" fill="#fff"/><rect x="9" y="4" width="1" height="1" fill="#fff"/>
</g></svg>
<svg class="a" style="left:146px;top:186px;" width="7" height="5" viewBox="0 0 7 5"><path d="M0 0 H7 L3.5 4 Z" fill="#666"/></svg>
<svg class="a" style="left:164px;top:181px;" width="13" height="13" viewBox="0 0 13 13"><circle cx="6.5" cy="6.5" r="5.3" fill="none" stroke="#777" stroke-width="1.6"/><path d="M6.5 0 V4 M6.5 9 V13 M0 6.5 H4 M9 6.5 H13" stroke="#777" stroke-width="1.6"/></svg>
<svg class="a" style="left:185px;top:181px;" width="13" height="13" viewBox="0 0 13 13"><path d="M0 5.5 H13 M0 8 H13" stroke="#777" stroke-width="1"/><path d="M6.5 0 V3.5 M4.5 2 L6.5 4 L8.5 2 M6.5 13 V9.5 M4.5 11 L6.5 9 L8.5 11" stroke="#777" stroke-width="1.2" fill="none"/></svg>
<div class="a" style="left:206px;top:180px;width:1px;height:16px;background:#c4c4c4;"></div>
<svg class="a" style="left:214px;top:181px;" width="13" height="13" viewBox="0 0 13 13"><g fill="#777"><circle cx="6.5" cy="6.5" r="4.2"/><rect x="5.3" y="0" width="2.4" height="13" transform="rotate(0 6.5 6.5)"/><rect x="5.3" y="0" width="2.4" height="13" transform="rotate(45 6.5 6.5)"/><rect x="5.3" y="0" width="2.4" height="13" transform="rotate(90 6.5 6.5)"/><rect x="5.3" y="0" width="2.4" height="13" transform="rotate(135 6.5 6.5)"/></g><circle cx="6.5" cy="6.5" r="1.8" fill="#e4e4e4"/></svg>
<svg class="a" style="left:229px;top:186px;" width="6" height="4" viewBox="0 0 6 4"><path d="M0 0 H6 L3 3.5 Z" fill="#777"/></svg>
<svg class="a" style="left:243px;top:181px;" width="13" height="13" viewBox="0 0 13 13"><rect x="0.8" y="0.8" width="3" height="11.5" fill="#fff" stroke="#777" stroke-width="1.5"/><rect x="0.8" y="0.8" width="3" height="5" fill="#777"/><path d="M5.5 3.5 H13 M5.5 3.5 L8 1 M5.5 3.5 L8 6" stroke="#777" stroke-width="1.3" fill="none"/></svg>
<svg class="a" style="left:76px;top:207px;" width="10" height="8" viewBox="0 0 10 8"><path d="M0 0 H9.5 L4.75 7.5 Z" fill="#a8a8a8"/></svg>
<svg class="a" style="left:96px;top:204px;" width="15" height="13" viewBox="0 0 15 13"><path d="M1 1 H6 L7 2.5 H14 V8 M10 11 H1 V1" fill="none" stroke="#c49a62" stroke-width="2"/><rect x="9" y="7" width="6" height="6" fill="#6aa6d6"/></svg>
<svg class="a" style="left:97px;top:227px;" width="8" height="10" viewBox="0 0 8 10"><path d="M0 0 V9.5 L7.5 4.75 Z" fill="#a8a8a8"/></svg>
<svg class="a" style="left:116px;top:225px;" width="14" height="12" viewBox="0 0 14 12"><path d="M1 1 H6 L7 2.5 H13 V11 H1 Z" fill="none" stroke="#72a8d4" stroke-width="2" stroke-linejoin="miter"/></svg>
<svg class="a" style="left:97px;top:248px;" width="8" height="10" viewBox="0 0 8 10"><path d="M0 0 V9.5 L7.5 4.75 Z" fill="#a8a8a8"/></svg>
<svg class="a" style="left:116px;top:246px;" width="14" height="12" viewBox="0 0 14 12"><path d="M1 1 H6 L7 2.5 H13 V11 H1 Z" fill="none" stroke="#72a8d4" stroke-width="2" stroke-linejoin="miter"/></svg>
<svg class="a" style="left:97px;top:269px;" width="8" height="10" viewBox="0 0 8 10"><path d="M0 0 V9.5 L7.5 4.75 Z" fill="#a8a8a8"/></svg>
<svg class="a" style="left:116px;top:266px;" width="15" height="13" viewBox="0 0 15 13"><path d="M1 1 H6 L7 2.5 H14 V8 M9 12 H1 V1" fill="none" stroke="#c49a62" stroke-width="2"/><rect x="9" y="7" width="1.6" height="1.6" fill="#e8a020"/><rect x="9" y="9" width="1.6" height="1.6" fill="#e8a020"/><rect x="9" y="11" width="1.6" height="1.6" fill="#e8a020"/><rect x="11" y="7" width="1.6" height="1.6" fill="#e8a020"/><rect x="11" y="9" width="1.6" height="1.6" fill="#e8a020"/><rect x="11" y="11" width="1.6" height="1.6" fill="#e8a020"/><rect x="13" y="7" width="1.6" height="1.6" fill="#e8a020"/><rect x="13" y="9" width="1.6" height="1.6" fill="#e8a020"/><rect x="13" y="11" width="1.6" height="1.6" fill="#e8a020"/></svg>
<svg class="a" style="left:76px;top:290px;" width="10" height="8" viewBox="0 0 10 8"><path d="M0 0 H9.5 L4.75 7.5 Z" fill="#a8a8a8"/></svg>
<svg class="a" style="left:96px;top:288px;" width="14" height="14" viewBox="0 0 14 14"><g transform="scale(1.0)"><path d="M7 1.2 A5.8 5.8 0 1 0 12.8 7" fill="none" stroke="#5cb85c" stroke-width="2.2"/><path d="M9.5 1.8 A5.8 5.8 0 0 1 12.3 4.5" fill="none" stroke="#9ed89e" stroke-width="2.2"/><circle cx="7" cy="7" r="2.4" fill="#2e9e4e"/></g></svg>
<svg class="a" style="left:116px;top:309px;" width="14" height="14" viewBox="0 0 14 14"><g transform="scale(1.0)"><path d="M7 1.2 A5.8 5.8 0 1 0 12.8 7" fill="none" stroke="#5cb85c" stroke-width="2.2"/><path d="M9.5 1.8 A5.8 5.8 0 0 1 12.3 4.5" fill="none" stroke="#9ed89e" stroke-width="2.2"/><circle cx="7" cy="7" r="2.4" fill="#2e9e4e"/></g></svg>
<svg class="a" style="left:116px;top:330px;" width="14" height="14" viewBox="0 0 14 14"><g transform="scale(1.0)"><path d="M7 1.2 A5.8 5.8 0 1 0 12.8 7" fill="none" stroke="#5cb85c" stroke-width="2.2"/><path d="M9.5 1.8 A5.8 5.8 0 0 1 12.3 4.5" fill="none" stroke="#9ed89e" stroke-width="2.2"/><circle cx="7" cy="7" r="2.4" fill="#2e9e4e"/></g></svg>
<svg class="a" style="left:117px;top:350px;" width="12" height="15" viewBox="0 0 12 15"><path d="M1 1 H7.5 L11 4.5 V14 H1 Z" fill="#fff" stroke="#888" stroke-width="1.3"/><path d="M3 7.5 H9 M3 10 H9 M3 12.5 H9" stroke="#5a9ad0" stroke-width="0.9"/></svg>
<svg class="a" style="left:116px;top:371px;" width="14" height="15" viewBox="0 0 14 15"><path d="M1 1 H7.5 L11 4.5 V14 H1 Z" fill="#fff" stroke="#888" stroke-width="1.3"/><rect x="5" y="9" width="2" height="5" fill="#e24a3b"/><rect x="8" y="6.5" width="2" height="7.5" fill="#f0a030"/><rect x="11" y="4.5" width="2" height="9.5" fill="#5cb85c"/></svg>
<svg class="a" style="left:116px;top:393px;" width="14" height="14" viewBox="0 0 14 14"><g transform="scale(1.0)"><path d="M7 1.2 A5.8 5.8 0 1 0 12.8 7" fill="none" stroke="#5cb85c" stroke-width="2.2"/><path d="M9.5 1.8 A5.8 5.8 0 0 1 12.3 4.5" fill="none" stroke="#9ed89e" stroke-width="2.2"/><circle cx="7" cy="7" r="2.4" fill="#2e9e4e"/></g></svg>
<svg class="a" style="left:116px;top:413px;" width="14" height="15" viewBox="0 0 14 15"><path d="M1 1 H7.5 L11 4.5 V14 H1 Z" fill="#fff" stroke="#888" stroke-width="1.3"/><rect x="5" y="9" width="2" height="5" fill="#e24a3b"/><rect x="8" y="6.5" width="2" height="7.5" fill="#f0a030"/><rect x="11" y="4.5" width="2" height="9.5" fill="#5cb85c"/></svg>
<div class="a" style="left:74px;top:556px;width:188px;height:13px;background:#f2f2f2;border-top:1px solid #e2e2e2;"></div>
<div class="a" style="left:76px;top:558px;width:105px;height:10px;background:linear-gradient(#f6f6f6,#d6d6d6);border:1px solid #bdbdbd;border-radius:3px;"></div>
<div class="t" style="left:58.64px;top:230.00px;font-size:12px;line-height:12px;color:#000;transform-origin:0 0;transform:rotate(-90deg);-webkit-text-stroke:0.05px;letter-spacing:-0.170px;">Captures</div>
<svg class="a" style="left:58px;top:235px;" width="11" height="13" viewBox="0 0 11 13"><circle cx="5.5" cy="7.5" r="4.6" fill="#6ab4e8" stroke="#888" stroke-width="1.3"/><rect x="4.5" y="0.5" width="2" height="2" fill="#888"/><path d="M1 2 L2.5 3.5" stroke="#888"/><path d="M5.5 7.5 L8 5" stroke="#333" stroke-width="1"/></svg>
<div class="t" style="left:57.84px;top:318.20px;font-size:12px;line-height:12px;color:#000;transform-origin:0 0;transform:rotate(-90deg);-webkit-text-stroke:0.05px;letter-spacing:-0.075px;">1: Project</div>
<div class="a" style="left:69px;top:312px;width:1px;height:7px;background:#000;"></div>
<svg class="a" style="left:57.9px;top:322.1px;" width="11.4" height="11.4" viewBox="0 0 11.4 11.4"><circle cx="5.7" cy="5.7" r="5.7" fill="#78c257"/><path d="M2.565 9.975 L5.7 3.1350000000000002 L8.835 9.975" stroke="#fff" stroke-width="1.25" fill="none"/><path d="M3.1350000000000002 6.555 H8.265" stroke="#fff" stroke-width="0.85"/><circle cx="5.7" cy="3.42" r="1.5960000000000003" fill="#555"/><rect x="5.13" y="0.5700000000000001" width="1.1400000000000001" height="1.9949999999999999" fill="#555"/></svg>
<div class="t" style="left:57.84px;top:415.40px;font-size:12px;line-height:12px;color:#000;transform-origin:0 0;transform:rotate(-90deg);-webkit-text-stroke:0.05px;letter-spacing:-0.145px;">7: Structure</div>
<div class="a" style="left:69px;top:409px;width:1px;height:7px;background:#000;"></div>
<svg class="a" style="left:57px;top:418px;" width="13" height="14" viewBox="0 0 13 14"><path d="M3 3 L10 3 M3 3 L6.5 10.5 M10 3 L6.5 10.5" stroke="#777" stroke-width="1"/><circle cx="2.8" cy="3" r="2.4" fill="#6aa6d6"/><circle cx="10.2" cy="3" r="2.4" fill="#e06666"/><circle cx="6.5" cy="10.8" r="2.6" fill="#c8894a"/></svg>
<div class="t" style="left:57.84px;top:514.30px;font-size:12px;line-height:12px;color:#000;transform-origin:0 0;transform:rotate(-90deg);-webkit-text-stroke:0.05px;letter-spacing:-0.361px;">2: Favorites</div>
<div class="a" style="left:69px;top:508px;width:1px;height:7px;background:#000;"></div>
<svg class="a" style="left:56px;top:519px;" width="14" height="14" viewBox="0 0 14 14"><path d="M7 0.5 L8.8 5 L13.5 5.2 L9.8 8.2 L11.1 13 L7 10.3 L2.9 13 L4.2 8.2 L0.5 5.2 L5.2 5 Z" fill="#f0a030"/></svg>
<div class="a" style="left:52px;top:176px;width:21px;height:393px;overflow:hidden">
<div class="t" style="left:5.84px;top:394.00px;font-size:12px;line-height:12px;color:#000;transform-origin:0 0;transform:rotate(-90deg);-webkit-text-stroke:0.05px;">nts</div>
</div>
<svg class="a" style="left:834px;top:187px;" width="15" height="12" viewBox="0 0 15 12"><text x="0.5" y="10.5" font-family="Liberation Sans" font-weight="bold" font-style="italic" font-size="15" fill="#3f7fb0">m</text></svg>
<div class="t" style="left:847.36px;top:204.40px;font-size:12px;line-height:12px;color:#000;transform-origin:0 0;transform:rotate(90deg);-webkit-text-stroke:0.05px;letter-spacing:-0.014px;">Maven Projects</div>
<svg class="a" style="left:834px;top:309px;" width="12" height="12" viewBox="0 0 12 12"><g transform="scale(0.8571428571428571)"><path d="M7 1.2 A5.8 5.8 0 1 0 12.8 7" fill="none" stroke="#5cb85c" stroke-width="2.2"/><path d="M9.5 1.8 A5.8 5.8 0 0 1 12.3 4.5" fill="none" stroke="#9ed89e" stroke-width="2.2"/><circle cx="7" cy="7" r="2.4" fill="#2e9e4e"/></g></svg>
<div class="t" style="left:847.36px;top:325.00px;font-size:12px;line-height:12px;color:#000;transform-origin:0 0;transform:rotate(90deg);-webkit-text-stroke:0.05px;letter-spacing:-0.403px;">Gradle</div>
<svg class="a" style="left:834px;top:461px;" width="13" height="13" viewBox="0 0 13 13"><g transform="scale(0.8)" fill="#77a318">
<path d="M4 6 C4 3.6 5.8 2 8 2 C10.2 2 12 3.6 12 6 Z"/>
<path d="M5 0.3 L6.3 2.6 M11 0.3 L9.7 2.6" stroke="#77a318" stroke-width="1.1" fill="none"/>
<path d="M4 7 H12 V12.2 Q12 13 11.2 13 H4.8 Q4 13 4 12.2 Z"/>
<rect x="1" y="7" width="2" height="5" rx="1"/>
<rect x="13" y="7" width="2" height="5" rx="1"/>
<rect x="5" y="12" width="2" height="4" rx="1"/>
<rect x="9" y="12" width="2" height="4" rx="1"/>
<rect x="6" y="4" width="1" height="1" fill="#fff"/><rect x="9" y="4" width="1" height="1" fill="#fff"/>
</g></svg>
<div class="t" style="left:847.36px;top:478.00px;font-size:12px;line-height:12px;color:#000;transform-origin:0 0;transform:rotate(90deg);-webkit-text-stroke:0.05px;letter-spacing:0.202px;">Android Model</div>
<svg class="a" style="left:274px;top:181px;" width="14" height="14" viewBox="0 0 14 14"><circle cx="7" cy="7" r="6.5" fill="#a6d2f2" stroke="#7ab6e0" stroke-width="1"/><path d="M9.2 5 A2.8 2.8 0 1 0 9.2 9" fill="none" stroke="#333" stroke-width="1.2"/></svg>
<svg class="a" style="left:394px;top:184px;" width="8" height="8" viewBox="0 0 8 8"><path d="M1 1 L7 7 M7 1 L1 7" stroke="#777" stroke-width="1.6"/></svg>
<svg class="a" style="left:286px;top:249px;" width="9" height="9" viewBox="0 0 9 9"><rect x="0.5" y="0.5" width="8" height="8" fill="#fff" stroke="#c8c8c8"/><path d="M2 4.5 H7 M4.5 2 V7" stroke="#888" stroke-width="1"/></svg>
<svg class="a" style="left:265px;top:300px;" width="14" height="15" viewBox="0 0 14 15"><path d="M0.5 0.5 H8 L10.5 3 V14.5 H0.5 Z" fill="none" stroke="#999" stroke-width="1.3"/><rect x="0" y="5" width="13.5" height="7" fill="#f0a040"/><path d="M5 6.5 L3 8.5 L5 10.5 M8.5 6.5 L10.5 8.5 L8.5 10.5" stroke="#333" stroke-width="1" fill="none"/></svg>
<svg class="a" style="left:264px;top:359px;" width="13" height="13" viewBox="0 0 13 13"><circle cx="4.8" cy="7" r="4.3" fill="#5aa6dc"/><circle cx="4.8" cy="7" r="1.8" fill="none" stroke="#333" stroke-width="1.1"/><path d="M10.5 12.5 V1.5 M8.5 4 L10.5 1 L12.5 4" stroke="#d9534f" stroke-width="1.3" fill="none"/></svg>
<svg class="a" style="left:286px;top:363px;" width="9" height="11" viewBox="0 0 9 11"><path d="M0.5 0.5 H8.5 V6.5 L4.5 10.5 L0.5 6.5 Z" fill="#fff" stroke="#c8c8c8"/><path d="M2 4 H7" stroke="#999"/></svg>
<svg class="a" style="left:286px;top:420px;" width="9" height="11" viewBox="0 0 9 11"><path d="M0.5 10.5 H8.5 V4.5 L4.5 0.5 L0.5 4.5 Z" fill="#fff" stroke="#c8c8c8"/><path d="M2 6.5 H7" stroke="#999"/></svg>
<div class="a" style="left:322px;top:375px;width:1px;height:45px;background:#e0e0e0;"></div>
<svg class="a" style="left:817px;top:206px;" width="12" height="9" viewBox="0 0 12 9"><path d="M1 4 L4.5 7.5 L11 1" stroke="#4ca34c" stroke-width="2.2" fill="none"/></svg>
<svg class="a" style="left:83px;top:576px;" width="12" height="11" viewBox="0 0 12 11"><rect x="0.75" y="0.75" width="10.5" height="9.5" fill="#a8a8a8" stroke="#808080" stroke-width="1.5"/><path d="M3 3 L5 4.5 L3 6 M5.5 7.5 H8.5" stroke="#fff" stroke-width="0.9" fill="none"/></svg>
<svg class="a" style="left:167px;top:575px;" width="14" height="14" viewBox="0 0 14 14"><rect x="0" y="0" width="9" height="9" fill="#5b9bd5"/><circle cx="8.5" cy="8.5" r="5" fill="#e5a04a"/><path d="M8.5 3.5 A5 5 0 0 0 3.5 8.5 H8.5 Z" fill="#22aa44"/></svg>
<svg class="a" style="left:302px;top:575px;" width="13" height="13" viewBox="0 0 13 13"><g transform="scale(0.8)" fill="#77a318">
<path d="M4 6 C4 3.6 5.8 2 8 2 C10.2 2 12 3.6 12 6 Z"/>
<path d="M5 0.3 L6.3 2.6 M11 0.3 L9.7 2.6" stroke="#77a318" stroke-width="1.1" fill="none"/>
<path d="M4 7 H12 V12.2 Q12 13 11.2 13 H4.8 Q4 13 4 12.2 Z"/>
<rect x="1" y="7" width="2" height="5" rx="1"/>
<rect x="13" y="7" width="2" height="5" rx="1"/>
<rect x="5" y="12" width="2" height="4" rx="1"/>
<rect x="9" y="12" width="2" height="4" rx="1"/>
<rect x="6" y="4" width="1" height="1" fill="#fff"/><rect x="9" y="4" width="1" height="1" fill="#fff"/>
</g></svg>
<svg class="a" style="left:446px;top:575px;" width="12" height="12" viewBox="0 0 12 12"><rect x="0.5" y="0.5" width="11" height="11" fill="#f6c585" stroke="#e1a55a"/><path d="M2.5 3.5 H4 M5 3.5 H9.5 M2.5 6 H4 M5 6 H9.5 M2.5 8.5 H4 M5 8.5 H9.5" stroke="#a0703a" stroke-width="1"/></svg>
<svg class="a" style="left:547px;top:574px;" width="14" height="14" viewBox="0 0 14 14"><circle cx="9" cy="8" r="4.2" fill="#f0b070"/><path d="M5 7 Q5 3 9 3.5 Q13 3.5 13 7 Z" fill="#777"/><rect x="5" y="11.5" width="8" height="2.5" fill="#3d8fc6"/><ellipse cx="4" cy="3.5" rx="3.6" ry="2.8" fill="#fff" stroke="#555" stroke-width="0.9"/><path d="M2 3 H6 M2 4.3 H6" stroke="#555" stroke-width="0.6"/></svg>
<svg class="a" style="left:631px;top:575px;" width="12" height="13" viewBox="0 0 12 13"><path d="M1 0.5 H11 Q12 0.5 12 1.5 V8 Q12 9 11 9 H8 L7 12 L5.5 9 H1 Q0 9 0 8 V1.5 Q0 0.5 1 0.5 Z" fill="#a8a8a8"/></svg>
<svg class="a" style="left:724px;top:575px;" width="12" height="12" viewBox="0 0 12 12"><rect x="0.6" y="0.6" width="10.8" height="10.8" fill="#fff" stroke="#3e86b8" stroke-width="1.2"/><rect x="0.6" y="0.6" width="10.8" height="2" fill="#3e86b8"/><path d="M2.5 4.5 H9 M2.5 6.5 H9 M2.5 8.5 H7" stroke="#3e86b8" stroke-width="0.9"/></svg>
<svg class="a" style="left:57px;top:594px;" width="15" height="16" viewBox="0 0 15 16"><rect x="0.5" y="0.5" width="13" height="12" fill="#c0c0c0" stroke="#707070"/><rect x="0" y="14.5" width="14" height="1.2" fill="#707070"/></svg>
<div class="a" style="left:505px;top:593px;width:1px;height:18px;background:#c4c4c4;"></div>
<div class="a" style="left:536px;top:593px;width:1px;height:18px;background:#c4c4c4;"></div>
<div class="a" style="left:578px;top:593px;width:1px;height:18px;background:#c4c4c4;"></div>
<div class="a" style="left:626px;top:593px;width:1px;height:18px;background:#c4c4c4;"></div>
<div class="a" style="left:778px;top:593px;width:1px;height:18px;background:#c4c4c4;"></div>
<svg class="a" style="left:568px;top:598px;" width="5" height="9" viewBox="0 0 5 9"><path d="M0 3.5 L2.5 0.5 L5 3.5 Z M0 5.5 L2.5 8.5 L5 5.5 Z" fill="#333"/></svg>
<svg class="a" style="left:616px;top:598px;" width="5" height="9" viewBox="0 0 5 9"><path d="M0 3.5 L2.5 0.5 L5 3.5 Z M0 5.5 L2.5 8.5 L5 5.5 Z" fill="#333"/></svg>
<svg class="a" style="left:785px;top:596px;" width="11" height="12" viewBox="0 0 11 12"><path d="M2.5 5 V3 A2.5 2.5 0 0 1 7.5 3" stroke="#777" stroke-width="1.3" fill="none"/><rect x="4" y="5" width="6.5" height="6" fill="#777"/><circle cx="7.2" cy="8" r="1" fill="#e8e8e8"/></svg>
<svg class="a" style="left:807px;top:595px;" width="13" height="15" viewBox="0 0 13 15"><circle cx="6.5" cy="6.5" r="5" fill="#fff" stroke="#777" stroke-width="1.3"/><rect x="2" y="3" width="9" height="3" fill="#777"/><path d="M3 11 Q6.5 14.5 10 11 M2 14.5 Q6.5 10 11 14.5" stroke="#777" stroke-width="1.2" fill="none"/><circle cx="4.5" cy="8" r="0.8" fill="#777"/><circle cx="8.5" cy="8" r="0.8" fill="#777"/></svg>
<svg class="a" style="left:832px;top:596px;" width="12" height="13" viewBox="0 0 12 13"><rect x="0.5" y="0.5" width="11" height="12" fill="none" stroke="#c0c0c0"/><path d="M2 3 H10 M2 5.5 H10 M2 8 H10 M2 10.5 H10" stroke="#c8c8c8"/></svg>
<svg class="a" style="left:60px;top:613px;" width="38" height="38" viewBox="0 0 38 38"><defs><radialGradient id="orb" cx="0.5" cy="0.75" r="0.7"><stop offset="0" stop-color="#3ad0f8"/><stop offset="0.5" stop-color="#1a6fb0"/><stop offset="1" stop-color="#0d3e72"/></radialGradient>
<linearGradient id="orbg" x1="0" y1="0" x2="0" y2="1"><stop offset="0" stop-color="#fff" stop-opacity="0.55"/><stop offset="1" stop-color="#fff" stop-opacity="0"/></linearGradient></defs>
<circle cx="19" cy="19" r="18" fill="url(#orb)" stroke="#0b3a66" stroke-width="1"/>
<path d="M9.5 11.5 Q13 9.5 18 11 L17 17.5 Q12.5 16.5 8.5 18 Z" fill="#f25022"/>
<path d="M19.5 11.2 Q24 13 28.5 11 L27.5 18 Q23 19.5 18.5 18 Z" fill="#7fba00"/>
<path d="M8.2 19.5 Q12.5 18 16.8 19.5 L15.8 26 Q11.5 24.5 7.2 26.5 Z" fill="#00a4ef"/>
<path d="M18.2 19.8 Q23 21.5 27.2 19.5 L26 26.5 Q21.5 28 17.2 26.5 Z" fill="#ffb900"/>
<ellipse cx="19" cy="12" rx="14" ry="9" fill="url(#orbg)"/></svg>
<svg class="a" style="left:123px;top:614px;" width="36" height="34" viewBox="0 0 36 34"><defs><radialGradient id="ie" cx="0.45" cy="0.75" r="0.75"><stop offset="0" stop-color="#7fe0ff"/><stop offset="0.45" stop-color="#1e8ad8"/><stop offset="1" stop-color="#0a3d8a"/></radialGradient></defs>
<circle cx="19" cy="18" r="12" fill="url(#ie)"/>
<ellipse cx="19.5" cy="15.2" rx="6.5" ry="4.6" fill="#fff"/>
<rect x="12" y="15.6" width="19" height="2.6" fill="#1570c0"/>
<path d="M23 18.2 H31 V22.5 H21 Z" fill="#a8c0dc"/>
<path d="M13 18.5 Q15 23.5 20.5 23.5 Q23 23.5 24.5 22 H21 Q17.5 22.5 16 18.5 Z" fill="#fff" opacity="0.0"/>
<path d="M4 31 Q0 26 10 16 Q22 4 33 3 Q37 4 33 10" fill="none" stroke="#f0ad28" stroke-width="2"/>
<path d="M5 31.5 Q10 33 18 29" fill="none" stroke="#f0ad28" stroke-width="2"/></svg>
<svg class="a" style="left:186px;top:618px;" width="34" height="31" viewBox="0 0 34 31"><defs><linearGradient id="fy" x1="0" y1="0" x2="0" y2="1"><stop offset="0" stop-color="#fdf3c0"/><stop offset="1" stop-color="#f0d77a"/></linearGradient><linearGradient id="fb" x1="0" y1="0" x2="0" y2="1"><stop offset="0" stop-color="#d8f0ff"/><stop offset="1" stop-color="#7cc0ea"/></linearGradient></defs>
<path d="M2 2.5 H13 L14 4.5 H30 V10 H2 Z" fill="#e9cf78" stroke="#c8a850" stroke-width="0.8"/>
<rect x="4" y="3" width="8" height="3" fill="#fff"/><rect x="4.5" y="3.3" width="3" height="2" fill="#1a1"/>
<rect x="11" y="5" width="8" height="3" fill="#fff"/><rect x="11.5" y="5.3" width="3" height="2" fill="#c22"/>
<rect x="18" y="7" width="9" height="3" fill="#fff"/><rect x="18.5" y="7.3" width="3" height="2" fill="#19e"/>
<path d="M1.3 9 H32.5 V27.5 H1.3 Z" fill="url(#fy)" stroke="#c9ad5a" stroke-width="0.9"/>
<path d="M5.5 18 Q5.5 16.5 7 16.5 H27 Q28.5 16.5 28.5 18 V29.5 H23 V22.5 H11 V29.5 H5.5 Z" fill="url(#fb)" stroke="#4a9ad0" stroke-width="1"/>
<path d="M8 19 L11 13 M8 19 L13 16" stroke="#fff" stroke-width="0.8" opacity="0.8"/></svg>
<svg class="a" style="left:250px;top:620px;" width="29" height="27" viewBox="0 0 29 27"><rect x="6" y="2" width="21" height="22" fill="#cde6f8" stroke="#6aaee0" stroke-width="0.9"/><rect x="3.5" y="1.5" width="21" height="23" fill="#bfe0f6" stroke="#6aaee0" stroke-width="0.9"/><rect x="1.3" y="1.3" width="21" height="24" fill="#a9d4f2" stroke="#5a9ed6" stroke-width="0.9"/>
<defs><radialGradient id="mp" cx="0.4" cy="0.35" r="0.7"><stop offset="0" stop-color="#ffb070"/><stop offset="1" stop-color="#e8600a"/></radialGradient></defs>
<circle cx="11.5" cy="13" r="8.5" fill="url(#mp)"/><path d="M8.5 7.5 L17 13 L8.5 18.5 Z" fill="#fff"/></svg>
<div class="a" style="left:297px;top:613px;width:60px;height:38px;background:linear-gradient(#e6eef6,#c8d8ea);border:1px solid #6a7d94;border-radius:3px;box-shadow:inset 0 0 0 1px rgba(255,255,255,0.6);"></div>
<svg class="a" style="left:311px;top:614px;" width="32" height="34" viewBox="0 0 32 34"><circle cx="16" cy="16" r="13.7" fill="#7dc45c"/><path d="M2.3 16 A13.7 13.7 0 0 0 29.7 16 Z" fill="#70b450"/>
<path d="M6 31 L16 10 L26 31" stroke="#e8e8e8" stroke-width="2.6" fill="none"/><path d="M8 21 Q16 25.5 24 21" stroke="#e8e8e8" stroke-width="2" fill="none"/>
<path d="M12.5 8.5 Q12.5 6 16 6 Q19.5 6 19.5 8.5 V12 Q19.5 14.5 16 14.5 Q12.5 14.5 12.5 12 Z" fill="#666"/><circle cx="16" cy="10.3" r="1.5" fill="#9a9a9a"/><rect x="14.8" y="3" width="2.4" height="3.5" fill="#666"/></svg>
<div class="a" style="left:359px;top:613px;width:60px;height:38px;background:linear-gradient(#dbe6f2,#bccfe4);border:1px solid #6a7d94;border-radius:3px;box-shadow:inset 0 0 0 1px rgba(255,255,255,0.5);"></div>
<svg class="a" style="left:372px;top:617px;" width="30" height="30" viewBox="0 0 30 30"><circle cx="14.5" cy="14.5" r="14.2" fill="#e0102a"/><circle cx="18" cy="15" r="10.5" fill="#1a9ce0"/><circle cx="16" cy="17" r="7.8" fill="#2a9a2a"/><circle cx="14.8" cy="19.5" r="4.5" fill="#90c820"/><circle cx="14" cy="20.5" r="2.4" fill="#f0e000"/></svg>
<div class="t" style="left:603.40px;top:624.14px;font-size:12px;line-height:12.0px;color:#000;"></div>
<svg class="a" style="left:624px;top:624px;" width="17" height="13" viewBox="0 0 17 13"><rect x="0.5" y="4.5" width="16" height="8" rx="1.5" fill="#dde4ec" stroke="#6c7a8a"/><path d="M3 7 H14 M3 9 H14 M5 11 H12" stroke="#6c7a8a" stroke-width="0.8" stroke-dasharray="1 1"/><path d="M8.5 4.5 V2 Q8.5 0.5 10 0.5" stroke="#6c7a8a" fill="none"/></svg>
<svg class="a" style="left:646px;top:622px;" width="16" height="16" viewBox="0 0 16 16"><circle cx="8" cy="8" r="7.5" fill="#1e3f9a" stroke="#0b1d55"/><circle cx="8" cy="8" r="6" fill="#2652c8"/><text x="4.3" y="12.5" font-family="Liberation Sans" font-weight="bold" font-size="12" fill="#fff">?</text></svg>
<svg class="a" style="left:672px;top:620px;" width="8" height="18" viewBox="0 0 8 18"><rect x="2" y="1" width="5" height="3" fill="none" stroke="#fff" stroke-width="0.9"/><rect x="0.5" y="3" width="5" height="3" fill="#7f93ab" stroke="#fff" stroke-width="0.9"/><path d="M1 13 H7 L4 16 Z" fill="#fff"/></svg>
<svg class="a" style="left:690px;top:620px;" width="17" height="17" viewBox="0 0 17 17"><path d="M2 1 V16" stroke="#fff" stroke-width="1.6"/><path d="M3 2 Q7 0 10 2 Q12 3 14 2 V9 Q12 10 10 9 Q7 7 3 9 Z" fill="#f0f0f0" stroke="#888" stroke-width="0.6"/><circle cx="11.5" cy="12" r="4.5" fill="#e02020" stroke="#fff" stroke-width="0.8"/><path d="M9.5 10 L13.5 14 M13.5 10 L9.5 14" stroke="#fff" stroke-width="1.3"/></svg>
<svg class="a" style="left:714px;top:621px;" width="16" height="16" viewBox="0 0 16 16"><rect x="5" y="4" width="10" height="8" fill="#2a3340" stroke="#eee" stroke-width="1.2"/><path d="M10 12 V15 M6 15 H14" stroke="#eee" stroke-width="1.3"/><path d="M2.5 1 V12 M1 1 V4 M4 1 V4" stroke="#eee" stroke-width="1.2"/><rect x="1" y="3.5" width="3" height="3" fill="#eee"/></svg>
<svg class="a" style="left:738px;top:621px;" width="16" height="16" viewBox="0 0 16 16"><path d="M1 5.5 H4 L8 2 V14 L4 10.5 H1 Z" fill="#eee" stroke="#555" stroke-width="0.7"/><path d="M10 5 Q12 8 10 11 M12 3.5 Q15 8 12 12.5" stroke="#eee" stroke-width="1.2" fill="none"/></svg>
<div class="a" style="left:837px;top:613px;width:1px;height:38px;background:#4a586c;"></div>
<div class="a" style="left:838px;top:613px;width:14px;height:38px;background:linear-gradient(#8593a6,#5b6b80 35%,#56667b 60%,#7484a0);border:1px solid #b4c0ce;"></div>
<svg class="a" style="left:54px;top:53px;" width="16" height="17" viewBox="0 0 16 17"><circle cx="8" cy="8" r="7" fill="#78c04e"/><path d="M1 8 A7 7 0 0 0 15 8 Z" fill="#6cb244" opacity="0.6"/><path d="M2.6 16 L8 6.5 L13.4 16" stroke="#f0f0f0" stroke-width="1.5" fill="none"/><path d="M4.3 11.5 Q8 14.2 11.7 11.5" stroke="#f0f0f0" stroke-width="1.2" fill="none"/><path d="M6.3 5.5 Q6.3 4 8 4 Q9.7 4 9.7 5.5 V8 Q9.7 9.5 8 9.5 Q6.3 9.5 6.3 8 Z" fill="#666"/><circle cx="8" cy="7" r="0.8" fill="#8fbf5a"/></svg>
<div class="a" style="left:753px;top:55px;width:31px;height:16px;background:linear-gradient(#c6d7ec 0%,#c6d7ec 45%,#a7bdd6 50%,#a7bdd6 100%);border:1px solid #5b6c86;border-radius:3px;box-shadow:inset 0 0 0 1px rgba(255,255,255,0.55);"></div>
<div class="a" style="left:786px;top:55px;width:31px;height:16px;background:linear-gradient(#c6d7ec 0%,#c6d7ec 45%,#a7bdd6 50%,#a7bdd6 100%);border:1px solid #5b6c86;border-radius:3px;box-shadow:inset 0 0 0 1px rgba(255,255,255,0.55);"></div>
<div class="a" style="left:819px;top:55px;width:31px;height:16px;background:linear-gradient(#e7a597 0%,#e7a597 45%,#c5482f 50%,#c5482f 100%);border:1px solid #4a1a1a;border-radius:3px;box-shadow:inset 0 0 0 1px rgba(255,255,255,0.55);"></div>
<svg class="a" style="left:763px;top:62px;" width="11" height="5" viewBox="0 0 11 5"><rect x="0.5" y="0.5" width="10" height="4" rx="1" fill="#fafafa" stroke="#3a3a4a"/></svg>
<svg class="a" style="left:795px;top:57px;" width="13" height="11" viewBox="0 0 13 11"><rect x="4.5" y="0.5" width="8" height="6" fill="#fafafa" stroke="#3a3a4a"/><rect x="0.5" y="3.5" width="8" height="7" fill="#fafafa" stroke="#3a3a4a"/><rect x="2.5" y="6.5" width="4" height="2" fill="#3a3a4a"/></svg>
<svg class="a" style="left:828px;top:57px;" width="13" height="11" viewBox="0 0 13 11"><path d="M2 1.5 L11 9.5 M11 1.5 L2 9.5" stroke="#3a3a4a" stroke-width="4" stroke-linecap="round"/><path d="M2 1.5 L11 9.5 M11 1.5 L2 9.5" stroke="#fafafa" stroke-width="2.2" stroke-linecap="round"/></svg>
<svg class="a" style="left:612px;top:118px;filter:drop-shadow(1px 1px 1px rgba(0,0,0,0.3));" width="14" height="22" viewBox="0 0 14 22"><path d="M1.2 1.2 V17.5 L5 13.8 L8 20.2 L10.6 19.2 L8 13.2 H12.8 Z" fill="#fff" stroke="#000" stroke-width="1" stroke-linejoin="round"/></svg>
</body></html>
